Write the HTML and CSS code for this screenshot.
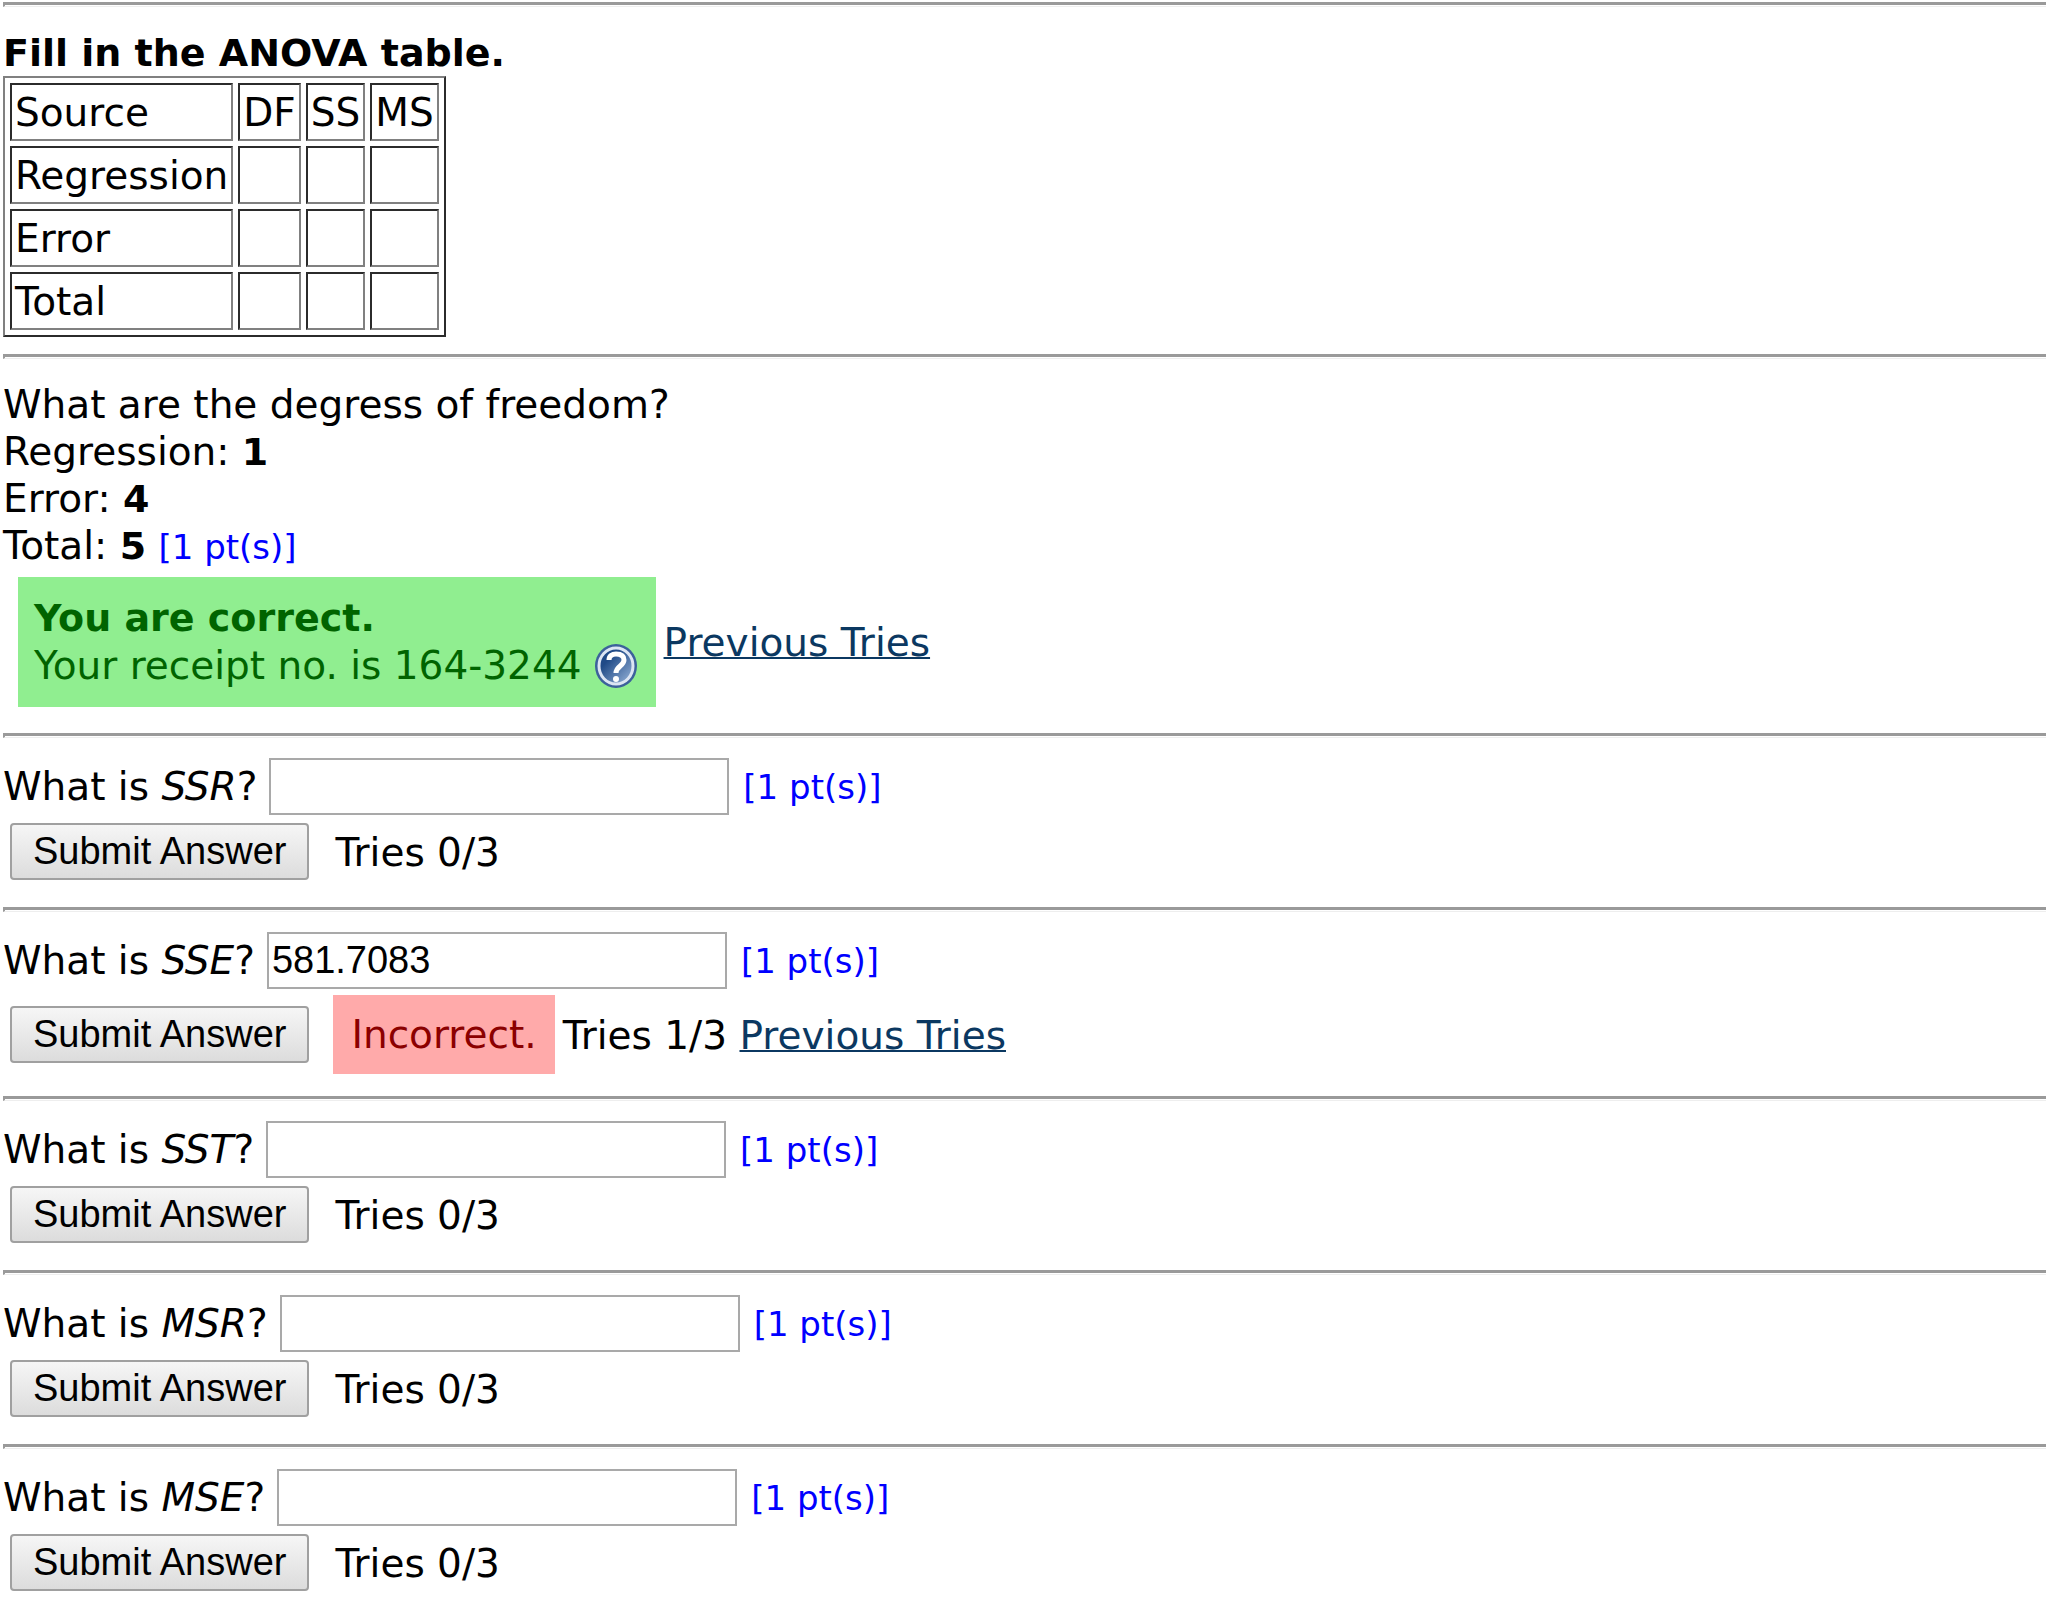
FILE: index.html
```html
<!DOCTYPE html>
<html lang="en">
<head>
  <meta charset="UTF-8" />
  <meta name="viewport" content="width=device-width, initial-scale=1.0" />
  <title>ANOVA table</title>
  <link rel="stylesheet" href="styles.css">
</head>
<body>
  <hr>
  <div class="intro">
    <h1>Fill in the ANOVA table.</h1>
    <table class="anova">
      <tr><td>Source</td><td>DF</td><td>SS</td><td>MS</td></tr>
      <tr><td>Regression</td><td></td><td></td><td></td></tr>
      <tr><td>Error</td><td></td><td></td><td></td></tr>
      <tr><td>Total</td><td></td><td></td><td></td></tr>
    </table>
  </div>
  <hr>
  <div class="freedom">
    <p>What are the degress of freedom?</p>
    <p>Regression: <b>1</b></p>
    <p>Error: <b>4</b></p>
    <p>Total: <b>5</b> <span class="pts">[1 pt(s)]</span></p>
    <div class="result">
      <div class="correct">
        <b>You are correct.</b>
        <div class="receipt">
          <span>Your receipt no. is 164-3244</span>
          <svg class="help" viewBox="0 0 44 46" role="img" aria-label="Help">
            <defs>
              <linearGradient id="helpFill" x1="0" y1="0" x2="1" y2="1">
                <stop offset="0.3" stop-color="#204a87" />
                <stop offset="1" stop-color="#9db9dd" />
              </linearGradient>
            </defs>
            <ellipse cx="22" cy="23" rx="21" ry="22" fill="#3c619b" />
            <ellipse cx="22" cy="23" rx="17" ry="18" fill="url(#helpFill)" stroke="#dce5f3" stroke-width="3" />
            <path d="M15 17c0-4 3-6 7-6 5 0 8 2 8 6 0 6-8 6-8 13" fill="none" stroke="#fff" stroke-width="5" />
            <circle cx="22" cy="36" r="3" fill="#fff" />
          </svg>
        </div>
      </div>
      <a href="#">Previous Tries</a>
    </div>
  </div>
  <hr>
  <form class="question">
    <div class="row">
      <label for="ssr">What is <i>SSR</i>?</label>
      <input type="text" id="ssr" />
      <span class="pts">[1 pt(s)]</span>
    </div>
    <div class="row submit">
      <button type="button">Submit Answer</button>
      <span class="tries">Tries 0/3</span>
    </div>
  </form>
  <hr>
  <form class="question answered">
    <div class="row">
      <label for="sse">What is <i>SSE</i>?</label>
      <input type="text" id="sse" value="581.7083" />
      <span class="pts">[1 pt(s)]</span>
    </div>
    <div class="row submit">
      <button type="button">Submit Answer</button>
      <span class="incorrect">Incorrect.</span>
      <span class="tries">Tries 1/3 <a href="#">Previous Tries</a></span>
    </div>
  </form>
  <hr>
  <form class="question">
    <div class="row">
      <label for="sst">What is <i>SST</i>?</label>
      <input type="text" id="sst" />
      <span class="pts">[1 pt(s)]</span>
    </div>
    <div class="row submit">
      <button type="button">Submit Answer</button>
      <span class="tries">Tries 0/3</span>
    </div>
  </form>
  <hr>
  <form class="question">
    <div class="row">
      <label for="msr">What is <i>MSR</i>?</label>
      <input type="text" id="msr" />
      <span class="pts">[1 pt(s)]</span>
    </div>
    <div class="row submit">
      <button type="button">Submit Answer</button>
      <span class="tries">Tries 0/3</span>
    </div>
  </form>
  <hr>
  <form class="question">
    <div class="row">
      <label for="mse">What is <i>MSE</i>?</label>
      <input type="text" id="mse" />
      <span class="pts">[1 pt(s)]</span>
    </div>
    <div class="row submit">
      <button type="button">Submit Answer</button>
      <span class="tries">Tries 0/3</span>
    </div>
  </form>
</body>
</html>
```
FILE: styles.css
```css
body {
  margin: 0;
  padding: 2px 0 0 3px;
  background: #fff;
  color: #000;
  font-family: Verdana, "DejaVu Sans", sans-serif;
  font-size: 39px;
  line-height: 47px;
}
hr {
  box-sizing: border-box;
  height: 5px;
  margin: 0;
  border: 0 solid #9a9a9a;
  border-top-width: 3px;
  border-left-width: 2px;
  border-bottom: 1px solid #eee;
}
h1 {
  margin: 0;
  font-size: 38px;
  line-height: 45px;
}
b {
  font-size: 38px;
}
p {
  margin: 0;
  height: 47px;
}
a {
  color: #0b3861;
  text-decoration-thickness: 2px;
}
.intro {
  padding: 24px 0 17px;
}
.anova {
  border: 2px solid;
  border-color: #808080 #2b2b2b #2b2b2b #808080;
  border-collapse: separate;
  border-spacing: 5px;
}
.anova td {
  height: 47px;
  padding: 4px 3px 3px;
  border: 2px solid;
  border-color: #2b2b2b #808080 #808080 #2b2b2b;
}
.pts {
  color: #00f;
  font-size: 34px;
}
.freedom {
  padding: 22px 0 26px;
}
.result {
  display: flex;
  align-items: center;
  gap: 8px;
  margin: 8px 0 0 15px;
}
.correct {
  padding: 18px 18px 18px 16px;
  background: #90ee90;
  color: #006400;
}
.correct b {
  display: block;
}
.receipt {
  display: flex;
  align-items: center;
  gap: 12px;
}
.help {
  width: 44px;
  height: 46px;
}
.question {
  display: flex;
  flex-direction: column;
  gap: 8px;
  padding: 20px 0 27px;
}
.answered {
  gap: 6px;
  padding-bottom: 22px;
}
.row {
  display: flex;
  align-items: center;
}
.row input {
  box-sizing: border-box;
  width: 460px;
  height: 57px;
  margin: 0 14px 0 12px;
  padding: 0 3px;
  border: 2px solid #a9a9a9;
  font-family: Arial, "Liberation Sans", sans-serif;
  font-size: 38px;
}
.row .pts,
.tries {
  padding-top: 2px;
}
.submit {
  padding-left: 7px;
}
.row button {
  box-sizing: border-box;
  height: 57px;
  margin-right: 26px;
  padding: 0 21px;
  border: 2px solid #a0a0a0;
  border-radius: 4px;
  background: linear-gradient(#f6f6f6, #dcdcdc);
  color: #000;
  font-family: Arial, "Liberation Sans", sans-serif;
  font-size: 38px;
}
.incorrect {
  margin: 0 8px 0 -2px;
  padding: 16px 18px;
  background: #faa;
  color: #8b0000;
}
```
